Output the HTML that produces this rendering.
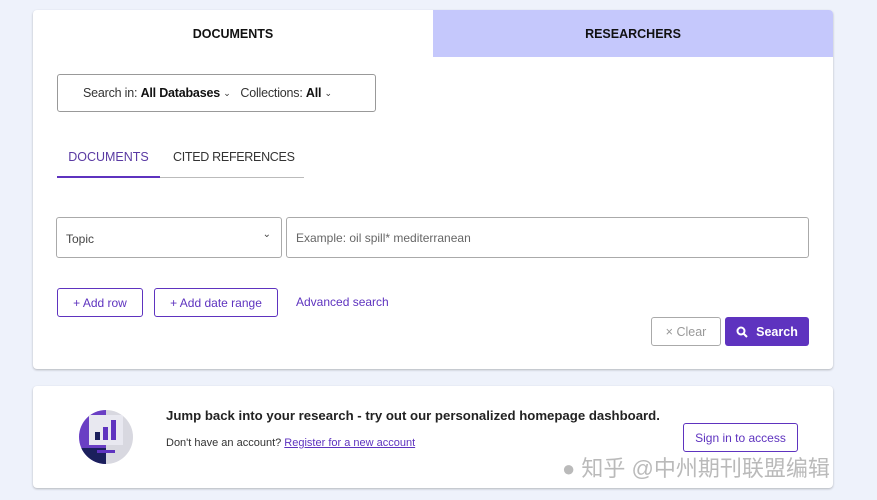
<!DOCTYPE html>
<html><head><meta charset="utf-8"><style>
*{box-sizing:border-box;margin:0;padding:0}
body{width:877px;height:500px;overflow:hidden;background:#eef2fb;font-family:"Liberation Sans","Noto Sans CJK SC",sans-serif;color:#222;position:relative;font-size:13px}
.a{position:absolute}
.card{background:#fff;border-radius:4px;box-shadow:0 1px 2px rgba(0,0,0,.25)}
.btn{border:1px solid #5e33bf;color:#5e33bf;border-radius:3px;background:#fff;display:flex;align-items:center;justify-content:center;font-size:12px}
</style></head><body>
<div class="a card" style="left:33px;top:10px;width:800px;height:359px;overflow:hidden">
 <div class="a" style="left:0;top:0;width:400px;height:47px;display:flex;align-items:center;justify-content:center;font-weight:bold;font-size:12.5px;color:#111">DOCUMENTS</div>
 <div class="a" style="left:400px;top:0;width:400px;height:47px;background:#c5c8fc;display:flex;align-items:center;justify-content:center;font-weight:bold;font-size:12.5px;color:#111">RESEARCHERS</div>
 <div class="a" style="left:24px;top:64px;width:319px;height:38px;border:1px solid #999;border-radius:3px;display:flex;align-items:center;padding-left:25px;font-size:12.5px;color:#333;letter-spacing:-0.2px">Search in:&nbsp;<b style="color:#111">All Databases</b>&nbsp;<span style="font-size:9px">⌄</span>&nbsp;&nbsp;&nbsp;Collections:&nbsp;<b style="color:#111">All</b>&nbsp;<span style="font-size:9px">⌄</span></div>
 <div class="a" style="left:24px;top:140px;width:103px;text-align:center;color:#5a3aa3;font-size:12.5px">DOCUMENTS</div>
 <div class="a" style="left:140px;top:140px;color:#333;font-size:12.5px;letter-spacing:-0.3px">CITED REFERENCES</div>
 <div class="a" style="left:24px;top:167px;width:247px;height:1px;background:#bbb"></div>
 <div class="a" style="left:24px;top:166px;width:103px;height:2px;background:#5e33bf"></div>
 <div class="a" style="left:23px;top:207px;width:226px;height:41px;border:1px solid #aaa;border-radius:3px;padding:14px 0 0 9px;font-size:12px;color:#444">Topic<span class="a" style="right:10px;top:11px;font-size:10px">⌄</span></div>
 <div class="a" style="left:253px;top:207px;width:523px;height:41px;border:1px solid #aaa;border-radius:3px;padding:13px 0 0 9px;font-size:12px;color:#666">Example: oil spill* mediterranean</div>
 <div class="a btn" style="left:24px;top:278px;width:86px;height:29px">+ Add row</div>
 <div class="a btn" style="left:121px;top:278px;width:124px;height:29px">+ Add date range</div>
 <div class="a" style="left:263px;top:285px;color:#5e33bf;font-size:12px">Advanced search</div>
 <div class="a" style="left:618px;top:307px;width:70px;height:29px;border:1px solid #aaa;border-radius:3px;color:#999;display:flex;align-items:center;justify-content:center;font-size:12.5px">× Clear</div>
 <div class="a" style="left:692px;top:307px;width:84px;height:29px;background:#5e33bf;border-radius:3px;color:#fff;font-weight:bold;display:flex;align-items:center;justify-content:center;font-size:12.5px"><svg width="12" height="12" viewBox="0 0 12 12" style="margin-right:8px"><circle cx="5" cy="5" r="3.5" stroke="#fff" stroke-width="2" fill="none"/><path d="M7.5 7.5L11 11" stroke="#fff" stroke-width="2"/></svg>Search</div>
</div>
<div class="a card" style="left:33px;top:386px;width:800px;height:102px">
 <svg class="a" style="left:46px;top:24px" width="54" height="54" viewBox="0 0 54 54"><defs><clipPath id="c"><circle cx="27" cy="27" r="27"/></clipPath></defs><g clip-path="url(#c)"><rect width="27" height="54" fill="#6a3fc4"/><rect x="27" width="27" height="54" fill="#d8d8e0"/><rect y="38" width="27" height="16" fill="#1b1f5c"/><rect x="10" y="5" width="34" height="30" fill="#e8e8f0"/><rect x="16" y="22" width="5" height="8" fill="#1b1f5c"/><rect x="24" y="17" width="5" height="13" fill="#5e33bf"/><rect x="32" y="10" width="5" height="20" fill="#5e33bf"/><rect x="18" y="40" width="18" height="3" fill="#5e33bf"/></g></svg>
 <div class="a" style="left:133px;top:22px;font-weight:bold;font-size:13.2px;color:#222">Jump back into your research - try out our personalized homepage dashboard.</div>
 <div class="a" style="left:133px;top:51px;font-size:11px;color:#333">Don't have an account? <span style="color:#5e33bf;text-decoration:underline">Register for a new account</span></div>
 <div class="a btn" style="left:650px;top:37px;width:115px;height:29px;font-size:12px">Sign in to access</div>
</div>
<div class="a" style="left:562px;top:451px;font-size:22px;color:rgba(140,140,140,.6);letter-spacing:0px">● 知乎 @中州期刊联盟编辑</div>
</body></html>
